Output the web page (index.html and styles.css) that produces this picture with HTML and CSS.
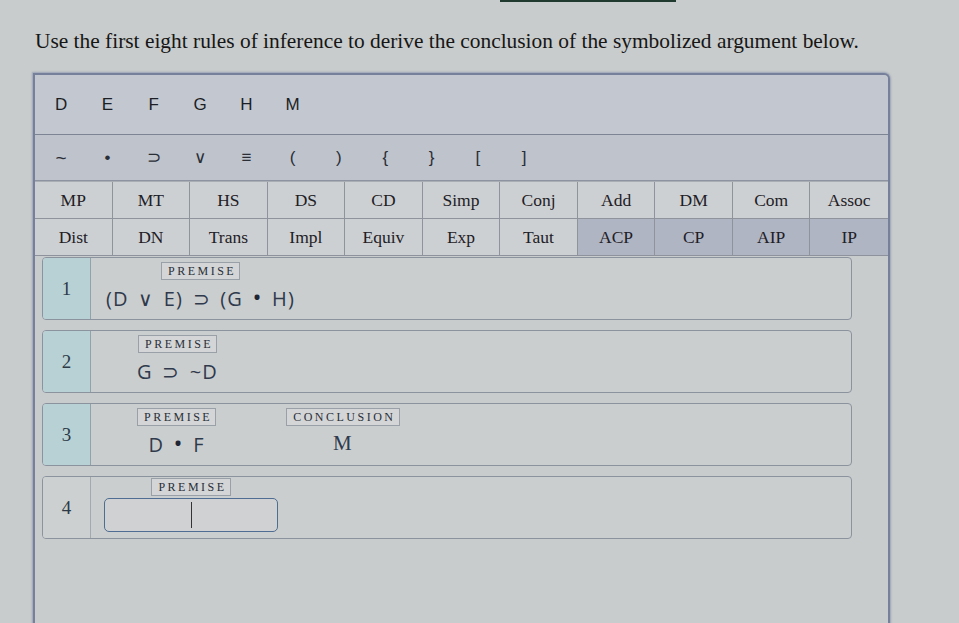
FILE: index.html
```html
<!DOCTYPE html>
<html>
<head>
<meta charset="utf-8">
<link rel="stylesheet" href="styles.css">
</head>
<body>
<div class="topbar"></div>
<h1 class="heading">Use the first eight rules of inference to derive the conclusion of the symbolized argument below.</h1>
<div class="panel">
  <div class="letters">
    <span>D</span><span>E</span><span>F</span><span>G</span><span>H</span><span>M</span>
  </div>
  <div class="symbols">
    <span class="tilde">~</span><span>•</span><span>⊃</span><span>∨</span><span>≡</span><span>(</span><span>)</span><span>{</span><span>}</span><span>[</span><span>]</span>
  </div>
  <div class="rules">
    <div class="rule">MP</div><div class="rule">MT</div><div class="rule">HS</div><div class="rule">DS</div><div class="rule">CD</div><div class="rule">Simp</div><div class="rule">Conj</div><div class="rule">Add</div><div class="rule">DM</div><div class="rule">Com</div><div class="rule">Assoc</div>
    <div class="rule">Dist</div><div class="rule">DN</div><div class="rule">Trans</div><div class="rule">Impl</div><div class="rule">Equiv</div><div class="rule">Exp</div><div class="rule">Taut</div><div class="rule dark">ACP</div><div class="rule dark">CP</div><div class="rule dark">AIP</div><div class="rule dark">IP</div>
  </div>
  <div class="lines">
    <div class="line">
      <div class="num">1</div>
      <div class="cell c1">
        <div class="tag">Premise</div>
        <div class="formula">(D ∨ E) ⊃ (G <span class="dot">•</span> H)</div>
      </div>
    </div>
    <div class="line">
      <div class="num">2</div>
      <div class="cell c2">
        <div class="tag">Premise</div>
        <div class="formula">G ⊃ ~D</div>
      </div>
    </div>
    <div class="line">
      <div class="num">3</div>
      <div class="cell c2">
        <div class="tag">Premise</div>
        <div class="formula">D <span class="dot">•</span> F</div>
      </div>
      <div class="cell concl">
        <div class="tag">Conclusion</div>
        <div class="formula">M</div>
      </div>
    </div>
    <div class="line">
      <div class="num blank">4</div>
      <div class="cell c4">
        <div class="tag">Premise</div>
        <div class="input"><span class="caret"></span></div>
      </div>
    </div>
  </div>
</div>
</body>
</html>
```
FILE: styles.css
```css
html, body {
  margin: 0;
  padding: 0;
}
body {
  background: #c9cccc;
  width: 959px;
  height: 623px;
  overflow: hidden;
}
.topbar {
  margin-left: 500px;
  width: 176px;
  height: 2px;
  background: #203a30;
}
.heading {
  margin: 0 0 20px 0;
  padding: 28px 0 0 35px;
  font-family: "Liberation Serif", serif;
  font-weight: normal;
  font-size: 21.4px;
  line-height: 23px;
  color: #161616;
  letter-spacing: 0;
}
.panel {
  margin-left: 33px;
  width: 853px;
  height: 560px;
  border: 2px solid #76809a;
  border-bottom: none;
  border-top-right-radius: 6px;
  box-shadow: 0 0 2px 1px #9aa2b6;
  background: #c9cccd;
}
.letters {
  height: 59px;
  display: flex;
  align-items: center;
  padding-left: 3px;
  background: #c3c7cf;
  border-bottom: 1px solid #7d8494;
  border-top-right-radius: 5px;
}
.letters span, .symbols span {
  width: 46.3px;
  text-align: center;
  font-family: "Liberation Sans", sans-serif;
  color: #1c1f26;
}
.letters span {
  font-size: 17px;
}
.symbols {
  height: 45px;
  display: flex;
  align-items: center;
  padding-left: 3px;
  background: #bec3cc;
  border-bottom: 1px solid #8d93a0;
}
.symbols span {
  font-size: 17px;
  color: #2a2e36;
}
.symbols .tilde {
  font-size: 19px;
}
.rules {
  display: grid;
  grid-template-columns: repeat(11, 1fr);
  grid-template-rows: 37px 36px;
  border-top: 1px solid #a9aeb5;
  border-bottom: 1px solid #8d929c;
}
.rule {
  display: flex;
  align-items: center;
  justify-content: center;
  font-family: "Liberation Serif", serif;
  font-size: 17.5px;
  color: #1e2026;
  background: #cdd0d2;
  border-right: 1px solid #8f949c;
  border-bottom: 1px solid #8f949c;
}
.rule:nth-child(11n) {
  border-right: none;
}
.rule:nth-child(n+12) {
  border-bottom: none;
}
.rule.dark {
  background: #b0b5c3;
}
.lines {
  margin: 1px 0 0 7px;
  width: 810px;
  display: flex;
  flex-direction: column;
  gap: 10px;
}
.line {
  height: 61px;
  display: flex;
  border: 1px solid #8b939e;
  border-radius: 4px;
  background: #cbcecf;
}
.num {
  width: 47px;
  flex: none;
  display: flex;
  align-items: center;
  justify-content: center;
  background: #b8d1d4;
  border-right: 1px solid #8fa3a8;
  border-radius: 3px 0 0 3px;
  font-family: "Liberation Serif", serif;
  font-size: 19px;
  color: #2c3a48;
}
.num.blank {
  background: #cdd0d0;
  border-right: 1px solid #a3aaae;
}
.cell {
  display: flex;
  flex-direction: column;
  align-items: center;
  padding-top: 4px;
}
.c1 { margin-left: 15px; }
.c2 { margin-left: 46px; }
.c4 { margin-left: 13px; padding-top: 1px; }
.concl { margin-left: 70px; }
.tag {
  font-family: "Liberation Serif", serif;
  font-size: 12px;
  line-height: 16px;
  text-transform: uppercase;
  letter-spacing: 2.5px;
  padding: 0 3px 0 6px;
  color: #2a2f38;
  background: #d3d5d6;
  border: 1px solid #9aa0a8;
}
.formula {
  margin-top: 6px;
  font-family: "Open Sans", sans-serif;
  font-size: 20px;
  line-height: 25px;
  letter-spacing: 1.2px;
  word-spacing: 3px;
  color: #2f3a4c;
  white-space: nowrap;
}
.formula .dot {
  font-size: 24px;
  line-height: 20px;
  color: #1f2633;
}
.concl .formula {
  font-family: "Liberation Serif", serif;
  font-size: 21px;
  margin-top: 5px;
}
.input {
  margin-top: 2px;
  width: 172px;
  height: 32px;
  border: 1.5px solid #4f6d92;
  border-radius: 5px;
  background: #cfd1d2;
  display: flex;
  justify-content: center;
  align-items: center;
}
.caret {
  width: 1px;
  height: 26px;
  background: #333;
}
```
